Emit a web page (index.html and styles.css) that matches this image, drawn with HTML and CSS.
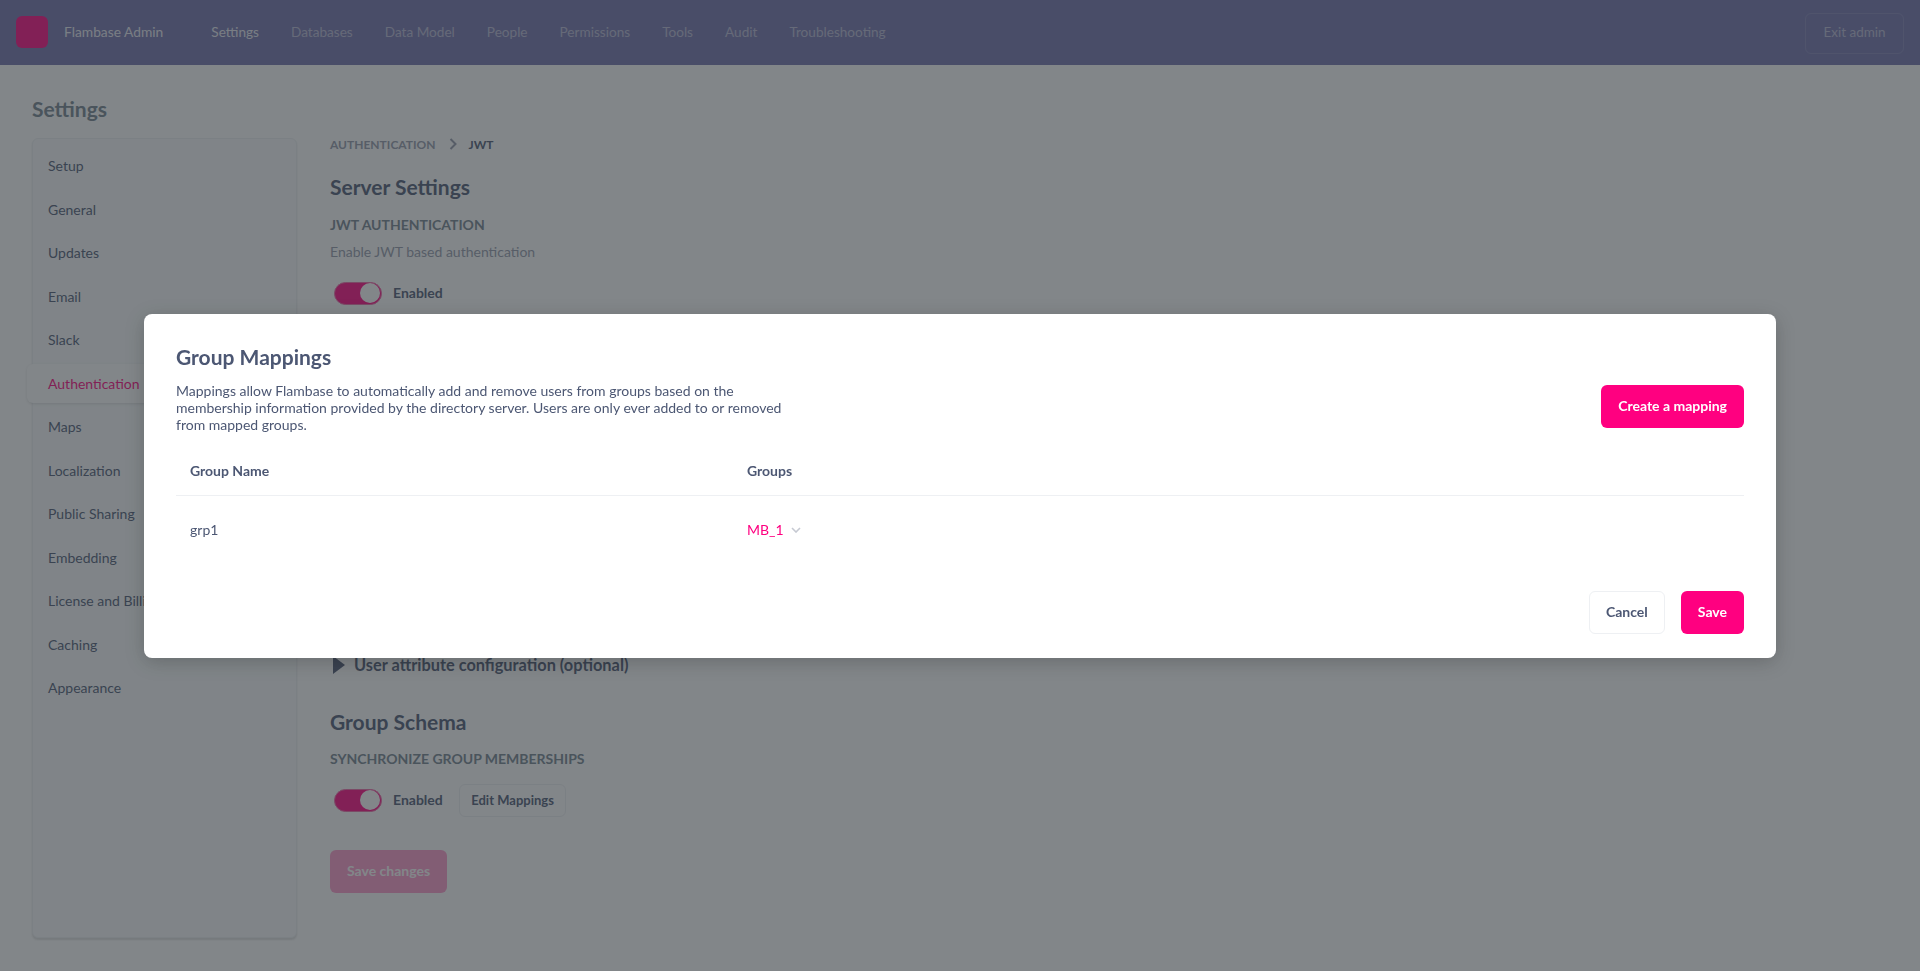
FILE: index.html
```html
<!DOCTYPE html>
<html lang="en">
<head>
    <meta charset="UTF-8">
    <title>Settings</title>
    <link rel="stylesheet" href="styles.css">
</head>
<body>
    <header class="navbar">
        <div class="logo"></div>
        <div class="brand">Flambase Admin</div>
        <nav class="nav-links">
            <a class="active">Settings</a>
            <a>Databases</a>
            <a>Data Model</a>
            <a>People</a>
            <a>Permissions</a>
            <a>Tools</a>
            <a>Audit</a>
            <a>Troubleshooting</a>
        </nav>
        <button class="exit-btn">Exit admin</button>
    </header>

    <div class="page">
        <h1 class="page-title">Settings</h1>
        <div class="columns">
            <aside class="sidebar">
                <a>Setup</a>
                <a>General</a>
                <a>Updates</a>
                <a>Email</a>
                <a>Slack</a>
                <a class="active">Authentication</a>
                <a>Maps</a>
                <a>Localization</a>
                <a>Public Sharing</a>
                <a>Embedding</a>
                <a>License and Billing</a>
                <a>Caching</a>
                <a>Appearance</a>
            </aside>
            <main class="content">
                <div class="breadcrumb">
                    <span class="crumb">Authentication</span>
                    <svg class="crumb-arrow" width="8" height="12" viewBox="0 0 8 12"><path d="M1.5 1 L6.5 6 L1.5 11" fill="none" stroke="#949aab" stroke-width="2"/></svg>
                    <span class="crumb-current">JWT</span>
                </div>
                <h2 class="section-title server-title">Server Settings</h2>
                <div class="field-label">JWT Authentication</div>
                <div class="field-desc">Enable JWT based authentication</div>
                <div class="toggle-row">
                    <span class="toggle"></span>
                    <span class="toggle-label">Enabled</span>
                </div>
                <!-- jwt fields sit behind the modal -->
                <div class="hidden-fields"></div>
                <div class="disclosure">
                    <svg width="12" height="18" viewBox="0 0 12 18"><path d="M0 0 L12 9 L0 18 Z" fill="#4c5773"/></svg>
                    <span>User attribute configuration (optional)</span>
                </div>
                <h2 class="section-title schema-title">Group Schema</h2>
                <div class="field-label">Synchronize group memberships</div>
                <div class="toggle-row sync-row">
                    <span class="toggle"></span>
                    <span class="toggle-label">Enabled</span>
                    <button class="small-btn">Edit Mappings</button>
                </div>
                <button class="save-changes">Save changes</button>
            </main>
        </div>
    </div>

    <div class="overlay">
        <div class="modal">
            <h2 class="modal-title">Group Mappings</h2>
            <div class="modal-intro">
                <p>Mappings allow Flambase to automatically add and remove users from groups based on the membership information provided by the directory server. Users are only ever added to or removed from mapped groups.</p>
                <button class="btn-primary">Create a mapping</button>
            </div>
            <table class="mapping-table">
                <thead>
                    <tr><th class="col-name">Group Name</th><th>Groups</th></tr>
                </thead>
                <tbody>
                    <tr>
                        <td>grp1</td>
                        <td>
                            <span class="group-select">MB_1
                                <svg width="10" height="6" viewBox="0 0 10 6"><path d="M1 1 L5 5 L9 1" fill="none" stroke="#c6c9d2" stroke-width="1.6"/></svg>
                            </span>
                        </td>
                    </tr>
                </tbody>
            </table>
            <div class="modal-footer">
                <button class="btn-default">Cancel</button>
                <button class="btn-primary">Save</button>
            </div>
        </div>
    </div>
</body>
</html>
```

FILE: styles.css
```css
* {
    box-sizing: border-box;
}

body {
    font-family: Lato, "Liberation Sans", sans-serif;
    font-size: 14px;
    color: #4c5773;
    background-color: #fff;
    margin: 0;
    height: 971px;
    overflow: hidden;
}

button {
    font-family: inherit;
    font-weight: 700;
    font-size: 14px;
}

/* top bar */
.navbar {
    height: 65px;
    background-color: #7172ad;
    display: flex;
    align-items: center;
    padding: 0 16px 2px;
}

.logo {
    width: 32px;
    height: 32px;
    border-radius: 6px;
    background-color: #ff0080;
}

.brand {
    margin-left: 16px;
    font-size: 13.8px;
    color: #fff;
    opacity: 0.85;
}

.nav-links {
    display: flex;
    gap: 32px;
    margin-left: 48px;
    flex: 1;
    font-size: 13.6px;
}

.nav-links a {
    color: rgba(255, 255, 255, 0.5);
}

.nav-links a.active {
    color: #fff;
    opacity: 0.85;
}

.exit-btn {
    width: 99px;
    height: 41px;
    margin-top: 3px;
    padding-bottom: 4px;
    background-color: transparent;
    border: 1px solid rgba(255, 255, 255, 0.12);
    border-radius: 6px;
    color: rgba(255, 255, 255, 0.5);
    font-size: 13.5px;
    font-weight: 400;
}

/* page */
.page {
    padding: 28px 32px 0;
}

.page-title {
    font-size: 21px;
    font-weight: 700;
    line-height: 32px;
    margin: 0 0 13px;
    color: #74838f;
}

.columns {
    display: flex;
}

.sidebar {
    width: 265px;
    height: 800px;
    flex-shrink: 0;
    background-color: #f9fbfc;
    border: 1px solid #eef0f3;
    border-radius: 6px;
    box-shadow: 0 2px 2px rgba(0, 0, 0, 0.13);
    padding: 5px 0;
    display: flex;
    flex-direction: column;
}

.sidebar a {
    height: 43.5px;
    line-height: 43.5px;
    padding-left: 15px;
    color: #4c5773;
    white-space: nowrap;
}

.sidebar a.active {
    height: 38.5px;
    line-height: 39.5px;
    margin: 2.5px 0 2.5px -6px;
    padding-left: 21px;
    color: #ff0080;
    background-color: #fff;
    border-radius: 6px;
    box-shadow: 0 1px 3px rgba(0, 0, 0, 0.12);
}

.content {
    margin-left: 33px;
    flex: 1;
}

.breadcrumb {
    display: flex;
    align-items: center;
    height: 14px;
    margin-top: -1px;
    font-size: 12px;
    font-weight: 700;
    text-transform: uppercase;
}

.crumb {
    color: #949aab;
}

.crumb-arrow {
    margin: 0 12px 0 13px;
}

.crumb-current {
    color: #4c5773;
}

.section-title {
    font-size: 21px;
    font-weight: 700;
    line-height: 28px;
    margin: 0;
    color: #4c5773;
}

.server-title {
    margin-top: 22px;
}

.field-label {
    font-weight: 700;
    text-transform: uppercase;
    color: #74838f;
    line-height: 18px;
    margin-top: 15px;
}

.field-desc {
    color: #949aab;
    line-height: 18px;
    margin-top: 9px;
}

.toggle-row {
    display: flex;
    align-items: center;
    height: 24px;
    margin-top: 20px;
    margin-left: 4px;
}

.toggle {
    width: 48px;
    height: 23px;
    border-radius: 12px;
    background-color: #ff0080;
    border: 1px solid #ee6aa8;
    position: relative;
}

/* knob */
.toggle::after {
    content: "";
    position: absolute;
    right: 1px;
    top: 0.5px;
    width: 20px;
    height: 20px;
    border-radius: 50%;
    background-color: #fff;
}

.toggle-label {
    margin-left: 11px;
    padding-bottom: 1px;
    font-weight: 700;
}

.hidden-fields {
    height: 348px;
}

.disclosure {
    display: flex;
    align-items: center;
    gap: 9px;
    margin-left: 3px;
    font-size: 16.38px;
    font-weight: 700;
    line-height: 24px;
}

.schema-title {
    margin-top: 31px;
}

.schema-title + .field-label {
    margin-top: 14px;
}

.sync-row {
    margin-top: 20px;
}

.small-btn {
    margin-left: 16px;
    height: 33px;
    padding: 0 11.5px 1px;
    background-color: transparent;
    border: 1px solid #eef0f3;
    border-radius: 6px;
    color: #4c5773;
    font-size: 13px;
}

.save-changes {
    display: block;
    margin-top: 38px;
    width: 117px;
    height: 43px;
    padding-bottom: 3px;
    background-color: #ff0080;
    opacity: 0.4;
    border: none;
    border-radius: 6px;
    color: #fff;
}

/* modal */
.overlay {
    position: fixed;
    top: 0;
    left: 0;
    width: 100%;
    height: 100%;
    background-color: rgba(46, 53, 59, 0.6);
    display: flex;
    justify-content: center;
    align-items: center;
}

.modal {
    width: 85%;
    height: 344px;
    background-color: #fff;
    border-radius: 8px;
    padding: 32px;
    box-shadow: 0 4px 20px rgba(0, 0, 0, 0.2);
}

.modal-title {
    font-size: 21px;
    font-weight: 700;
    line-height: 22px;
    margin: 0 0 13px;
}

.modal-intro {
    display: flex;
    justify-content: space-between;
    align-items: flex-start;
}

.modal-intro p {
    margin: 1px 0 0;
    width: 620px;
    line-height: 17px;
}

.modal-intro .btn-primary {
    margin-top: 4px;
}

.btn-primary {
    height: 43px;
    padding: 0 17px 2px;
    background-color: #ff0080;
    border: none;
    border-radius: 6px;
    color: #fff;
}

.btn-default {
    height: 43px;
    padding: 0 16px 2px;
    background-color: #fff;
    border: 1px solid #eef0f3;
    border-radius: 6px;
    color: #4c5773;
}

.mapping-table {
    width: 100%;
    border-collapse: collapse;
    margin-top: 12px;
    text-align: left;
}

.mapping-table th {
    height: 51px;
    padding: 1px 14px 0;
    font-weight: 700;
    border-bottom: 1px solid #eef0f3;
}

.mapping-table th.col-name {
    width: 557px;
}

.mapping-table td {
    height: 69px;
    padding: 0 14px 1px;
}

.group-select {
    color: #ff0080;
    display: inline-flex;
    align-items: center;
    gap: 7px;
}

.modal-footer {
    display: flex;
    justify-content: flex-end;
    gap: 16px;
    margin-top: 26px;
}
```
